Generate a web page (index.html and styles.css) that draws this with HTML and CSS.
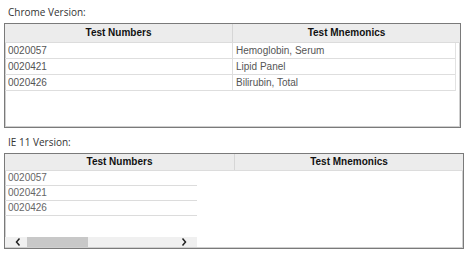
FILE: index.html
```html
<!DOCTYPE html>
<html>
<head>
<meta charset="utf-8">
<link rel="stylesheet" href="styles.css">
</head>
<body>
<div class="page">
  <section class="demo demo-chrome">
    <div class="caption">Chrome Version:</div>
    <div class="grid-box chrome-box">
      <div class="grid-head">
        <div class="hcell">Test Numbers</div>
        <div class="hcell">Test Mnemonics</div>
      </div>
      <div class="chrome-body">
        <div class="row"><div class="cell">0020057</div><div class="cell">Hemoglobin, Serum</div></div>
        <div class="row"><div class="cell">0020421</div><div class="cell">Lipid Panel</div></div>
        <div class="row"><div class="cell">0020426</div><div class="cell">Bilirubin, Total</div></div>
      </div>
    </div>
  </section>

  <section class="demo demo-ie">
    <div class="caption">IE 11 Version:</div>
    <div class="grid-box ie-box">
      <div class="grid-head ie-head">
        <div class="hcell">Test Numbers</div>
        <div class="hcell">Test Mnemonics</div>
      </div>
      <div class="ie-body">
        <div class="ie-pane">
          <div class="ie-rows">
            <div class="ie-row">0020057</div>
            <div class="ie-row">0020421</div>
            <div class="ie-row">0020426</div>
          </div>
          <div class="hscroll">
            <svg class="arrow arrow-left" width="6" height="8" viewBox="0 0 6 8"><path d="M4.5 0.5 L1.5 4 L4.5 7.5" fill="none" stroke="#222" stroke-width="1.5"/></svg>
            <span class="thumb"></span>
            <span class="track"></span>
            <svg class="arrow arrow-right" width="6" height="8" viewBox="0 0 6 8"><path d="M1.5 0.5 L4.5 4 L1.5 7.5" fill="none" stroke="#222" stroke-width="1.5"/></svg>
          </div>
        </div>
      </div>
    </div>
  </section>
</div>
</body>
</html>
```
FILE: styles.css
```css
html, body {
  margin: 0;
  padding: 0;
  background: #fff;
}

.page {
  width: 474px;
  height: 258px;
  padding: 5px 0 0 4px;
  box-sizing: border-box;
  font-family: "Liberation Sans", Arial, sans-serif;
}

.caption {
  font-family: "Open Sans", "Noto Sans", sans-serif;
  font-size: 10px;
  line-height: 14px;
  color: #333;
  padding-left: 4px;
  margin-bottom: 4px;
}

.grid-box {
  border: 1px solid #7a7a7a;
  box-shadow: inset 0 0 0 1px #cfcfcf;
  box-sizing: border-box;
  display: flex;
  flex-direction: column;
}

.chrome-box {
  width: 457px;
  height: 105px;
}

.grid-head {
  display: grid;
  grid-template-columns: 227px 1fr;
  height: 18px;
  background: #ececec;
  border-bottom: 1px solid #dcdcdc;
  flex: none;
}

.hcell {
  font-weight: bold;
  font-size: 10px;
  line-height: 18px;
  color: #111;
  text-align: center;
}

.hcell + .hcell {
  border-left: 1px solid #d6d6d6;
}

.chrome-body {
  width: 450px;
  border-right: 1px solid #e2e2e2;
}

.row {
  display: grid;
  grid-template-columns: 227px 1fr;
  height: 16px;
  border-bottom: 1px solid #dedede;
  box-sizing: border-box;
}

.row .cell {
  font-size: 10px;
  line-height: 15px;
  color: #555;
  padding-left: 3px;
  white-space: nowrap;
}

.row .cell + .cell {
  border-left: 1px solid #dedede;
}

.demo-ie {
  margin-top: 7px;
}

.ie-box {
  width: 460px;
  height: 96px;
}

.ie-head {
  height: 16px;
  grid-template-columns: 229px 1fr;
}

.ie-head .hcell {
  line-height: 16px;
}

.ie-body {
  flex: 1;
  display: flex;
}

.ie-pane {
  width: 192px;
  display: flex;
  flex-direction: column;
  justify-content: space-between;
}

.ie-row {
  height: 15px;
  font-size: 10px;
  line-height: 14px;
  color: #666;
  padding-left: 3px;
  border-bottom: 1px solid #dcdcdc;
  box-sizing: border-box;
}

.hscroll {
  height: 10px;
  margin-bottom: 1px;
  background: #f0f0f0;
  display: flex;
  align-items: center;
}

.hscroll .arrow {
  flex: none;
}

.arrow-left {
  margin-left: 10px;
}

.hscroll .thumb {
  width: 61px;
  height: 10px;
  background: #c8c8c8;
  margin-left: 6px;
}

.hscroll .track {
  flex: 1;
}

.arrow-right {
  margin-right: 10px;
}
```
